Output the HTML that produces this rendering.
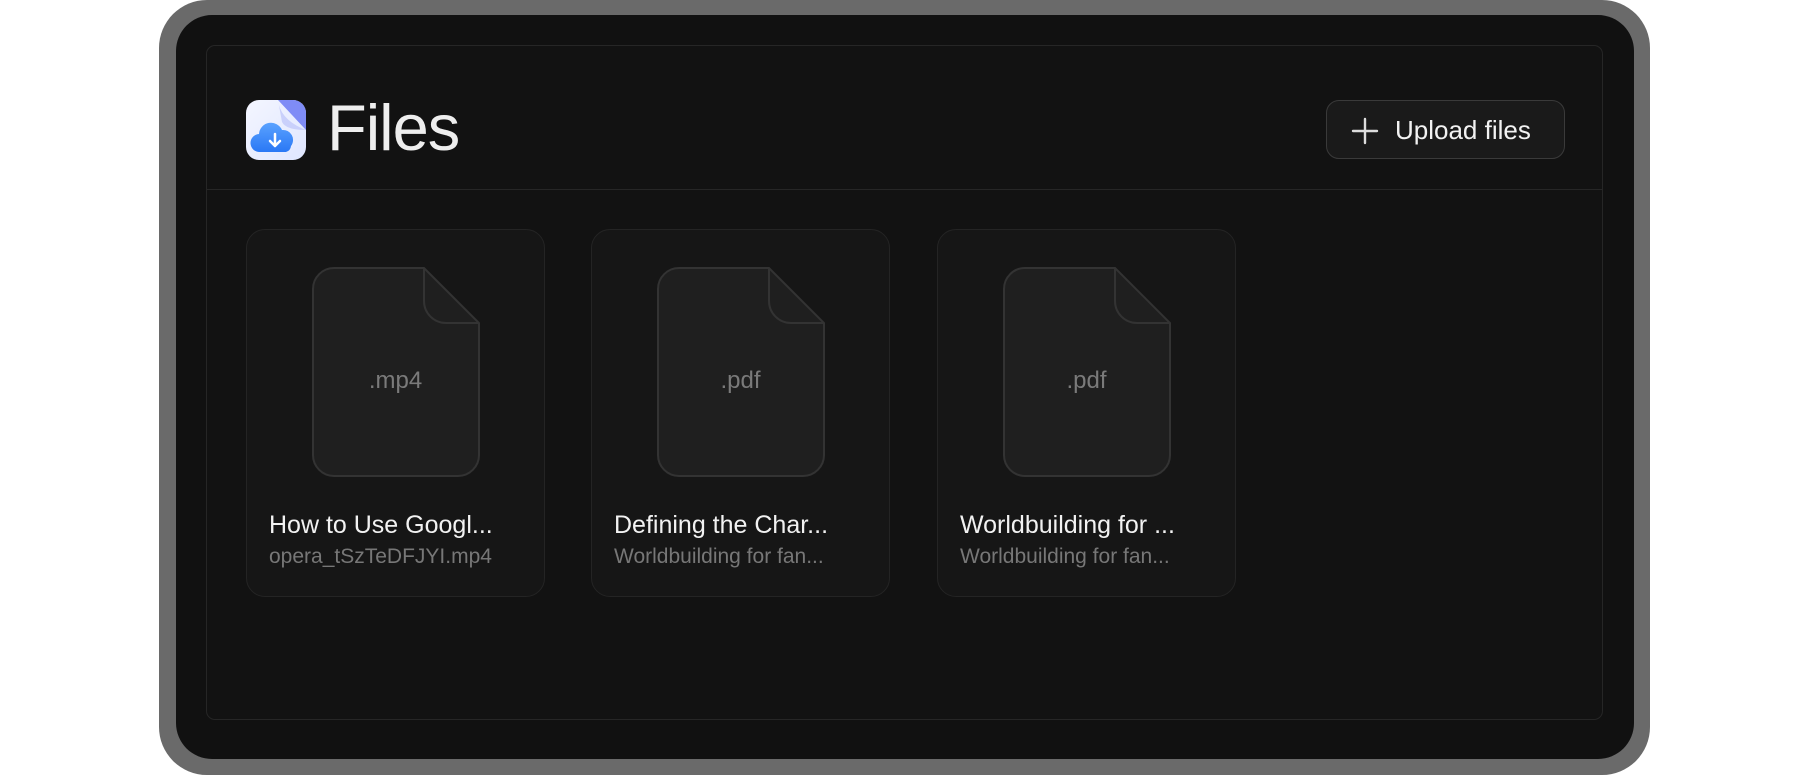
<!DOCTYPE html>
<html><head><meta charset="utf-8"><style>
html,body{margin:0;width:1811px;height:775px;background:#fff;overflow:hidden;font-family:"Liberation Sans",sans-serif}
.frame{position:absolute;left:159px;top:0;width:1491px;height:775px;background:#6a6a6a;border-radius:48px}
.inner{position:absolute;left:176px;top:15px;width:1458px;height:744px;background:#111;border-radius:36px}
.panel{position:absolute;left:206px;top:45px;width:1397px;height:675px;background:#121212;border:1px solid #262626;border-radius:9px;box-sizing:border-box}
.div{position:absolute;left:207px;top:189px;width:1396px;height:1px;background:#262626}
.title{position:absolute;left:327px;top:88px;font-size:65px;color:#eee;letter-spacing:-1px;line-height:80px}
.btn{position:absolute;left:1326px;top:100px;width:239px;height:59px;box-sizing:border-box;border:1px solid #3a3a3a;border-radius:13px;background:#1a1a1a;color:#f2f2f2;font-size:26px}
.btn span{position:absolute;left:68px;top:14px}
.card{position:absolute;top:229px;width:299px;height:368px;box-sizing:border-box;border:1px solid #242424;border-radius:19px;background:#161616}
.card svg{position:absolute;left:65px;top:37px}
.ext{position:absolute;left:0;width:100%;top:137px;text-align:center;color:#7a7a7a;font-size:24px}
.t{position:absolute;left:22px;top:281px;color:#f2f2f2;font-size:25px;white-space:nowrap}
.s{position:absolute;left:22px;top:315px;color:#777;font-size:21px;white-space:nowrap}
</style></head><body>
<div class="frame"></div><div class="inner"></div><div class="panel"></div><div class="div"></div>
<svg style="position:absolute;left:246px;top:100px" width="60" height="60" viewBox="0 0 60 60">
<defs><linearGradient id="g" x1="0" y1="0" x2="1" y2="1"><stop offset="0" stop-color="#f4f6ff"/><stop offset="1" stop-color="#dfe6ff"/></linearGradient>
<linearGradient id="c" x1="0" y1="0" x2="0" y2="1"><stop offset="0" stop-color="#5aa2ff"/><stop offset="1" stop-color="#2a78f5"/></linearGradient></defs>
<rect width="60" height="60" rx="13" fill="url(#g)"/>
<path d="M32 0 H47 A13 13 0 0 1 60 13 V30 Z" fill="#7f8cf6"/>
<path d="M32 0 Q34 20 60 30 Q40 30 36 22 Z" fill="#c9d0fb"/>
<path d="M14 52 A9 9 0 0 1 13 34 A12 12 0 0 1 36 30 A10 10 0 0 1 45 46 A7 7 0 0 1 40 52 Z" fill="url(#c)"/>
<path d="M29 34 V46 M24 41 L29 46 L34 41" stroke="#fff" stroke-width="2.5" fill="none" stroke-linecap="round" stroke-linejoin="round"/>
</svg>
<div class="title">Files</div>
<div class="btn"><svg style="position:absolute;left:24px;top:16px" width="28" height="28" viewBox="0 0 28 28"><path d="M14 2V26M2 14H26" stroke="#ddd" stroke-width="2.4" stroke-linecap="round"/></svg><span>Upload files</span></div>

<div class="card" style="left:246px"><svg width="168" height="210" viewBox="0 0 168 210"><path d="M22 1 H112 L167 56 V188 A21 21 0 0 1 146 209 H22 A21 21 0 0 1 1 188 V22 A21 21 0 0 1 22 1Z" fill="#1f1f1f" stroke="#333" stroke-width="2"/><path d="M112 1 V34 A22 22 0 0 0 134 56 H167" fill="none" stroke="#333" stroke-width="2"/></svg><div class="ext">.mp4</div><div class="t">How to Use Googl...</div><div class="s">opera_tSzTeDFJYI.mp4</div></div>
<div class="card" style="left:591px"><svg width="168" height="210" viewBox="0 0 168 210"><path d="M22 1 H112 L167 56 V188 A21 21 0 0 1 146 209 H22 A21 21 0 0 1 1 188 V22 A21 21 0 0 1 22 1Z" fill="#1f1f1f" stroke="#333" stroke-width="2"/><path d="M112 1 V34 A22 22 0 0 0 134 56 H167" fill="none" stroke="#333" stroke-width="2"/></svg><div class="ext">.pdf</div><div class="t">Defining the Char...</div><div class="s">Worldbuilding for fan...</div></div>
<div class="card" style="left:937px"><svg width="168" height="210" viewBox="0 0 168 210"><path d="M22 1 H112 L167 56 V188 A21 21 0 0 1 146 209 H22 A21 21 0 0 1 1 188 V22 A21 21 0 0 1 22 1Z" fill="#1f1f1f" stroke="#333" stroke-width="2"/><path d="M112 1 V34 A22 22 0 0 0 134 56 H167" fill="none" stroke="#333" stroke-width="2"/></svg><div class="ext">.pdf</div><div class="t">Worldbuilding for ...</div><div class="s">Worldbuilding for fan...</div></div>
</body></html>
